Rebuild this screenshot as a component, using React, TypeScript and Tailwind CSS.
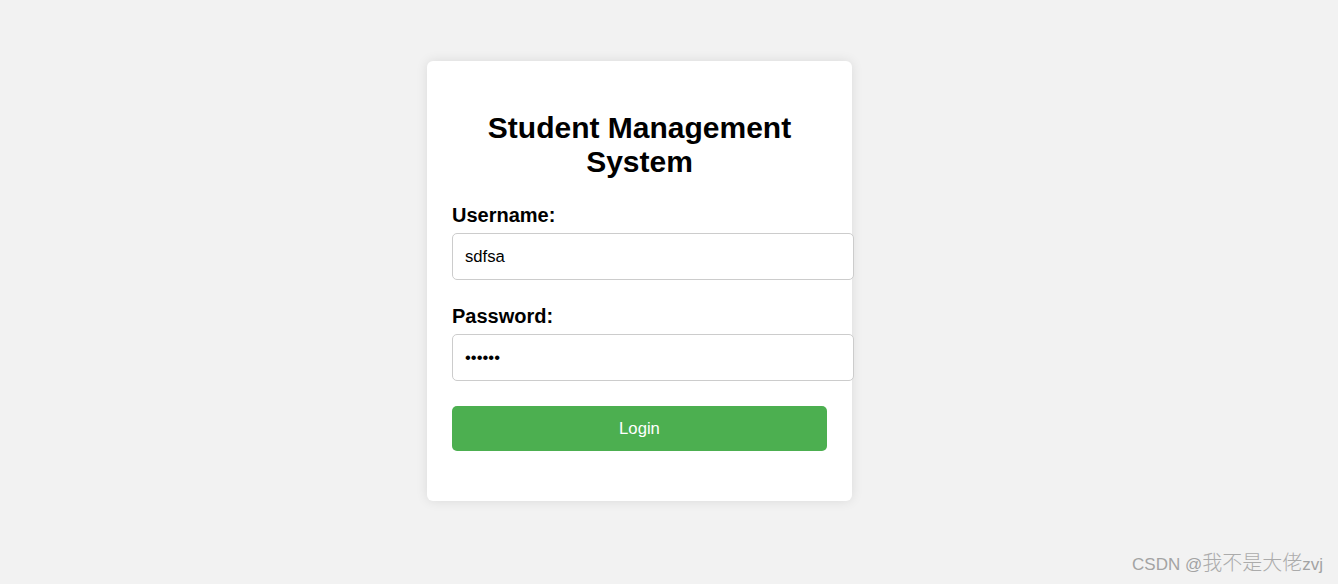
export default function App() {
  return (
    <div className="relative min-h-[584px] bg-[#f2f2f2] font-['Liberation_Sans',Arial,sans-serif] text-black">
      <div className="pl-[427px] pt-[61px]">
        <div className="w-[425px] rounded-[6px] bg-white px-[25px] pb-[50px] pt-[25px] shadow-[0_0_12px_rgba(0,0,0,0.1)]">
          <h2 className="mb-[26px] mt-[25px] text-center text-[30px] font-bold leading-[33.5px]">
            Student Management System
          </h2>

          <div className="mb-[25px]">
            <label className="mb-[6px] block text-[20px] font-bold leading-[23px]">Username:</label>
            <input
              type="text"
              readOnly
              defaultValue="sdfsa"
              className="block h-[47px] w-[402px] rounded-[5px] border border-[#ccc] bg-white px-[12px] text-[16.67px] text-black outline-none"
            />
          </div>

          <div className="mb-[25px]">
            <label className="mb-[6px] block text-[20px] font-bold leading-[23px]">Password:</label>
            <input
              type="password"
              readOnly
              defaultValue="123456"
              className="block h-[47px] w-[402px] rounded-[5px] border border-[#ccc] bg-white px-[12px] text-[16.67px] text-black outline-none"
            />
          </div>

          <button
            type="button"
            className="block h-[45px] w-full rounded-[5px] bg-[#4caf50] text-[16.67px] text-white"
          >
            Login
          </button>
        </div>
      </div>

      <div className="absolute bottom-[7px] right-[15px] flex items-baseline font-['Liberation_Sans','Noto_Sans_CJK_SC',sans-serif] text-[17px] text-[#a3a3a3]">
        <span>CSDN @</span>
        <span className="font-['Noto_Sans_CJK_SC',sans-serif] text-[20px] font-light leading-none text-[#ababab]">我不是大佬</span>
        <span>zvj</span>
      </div>
    </div>
  );
}
